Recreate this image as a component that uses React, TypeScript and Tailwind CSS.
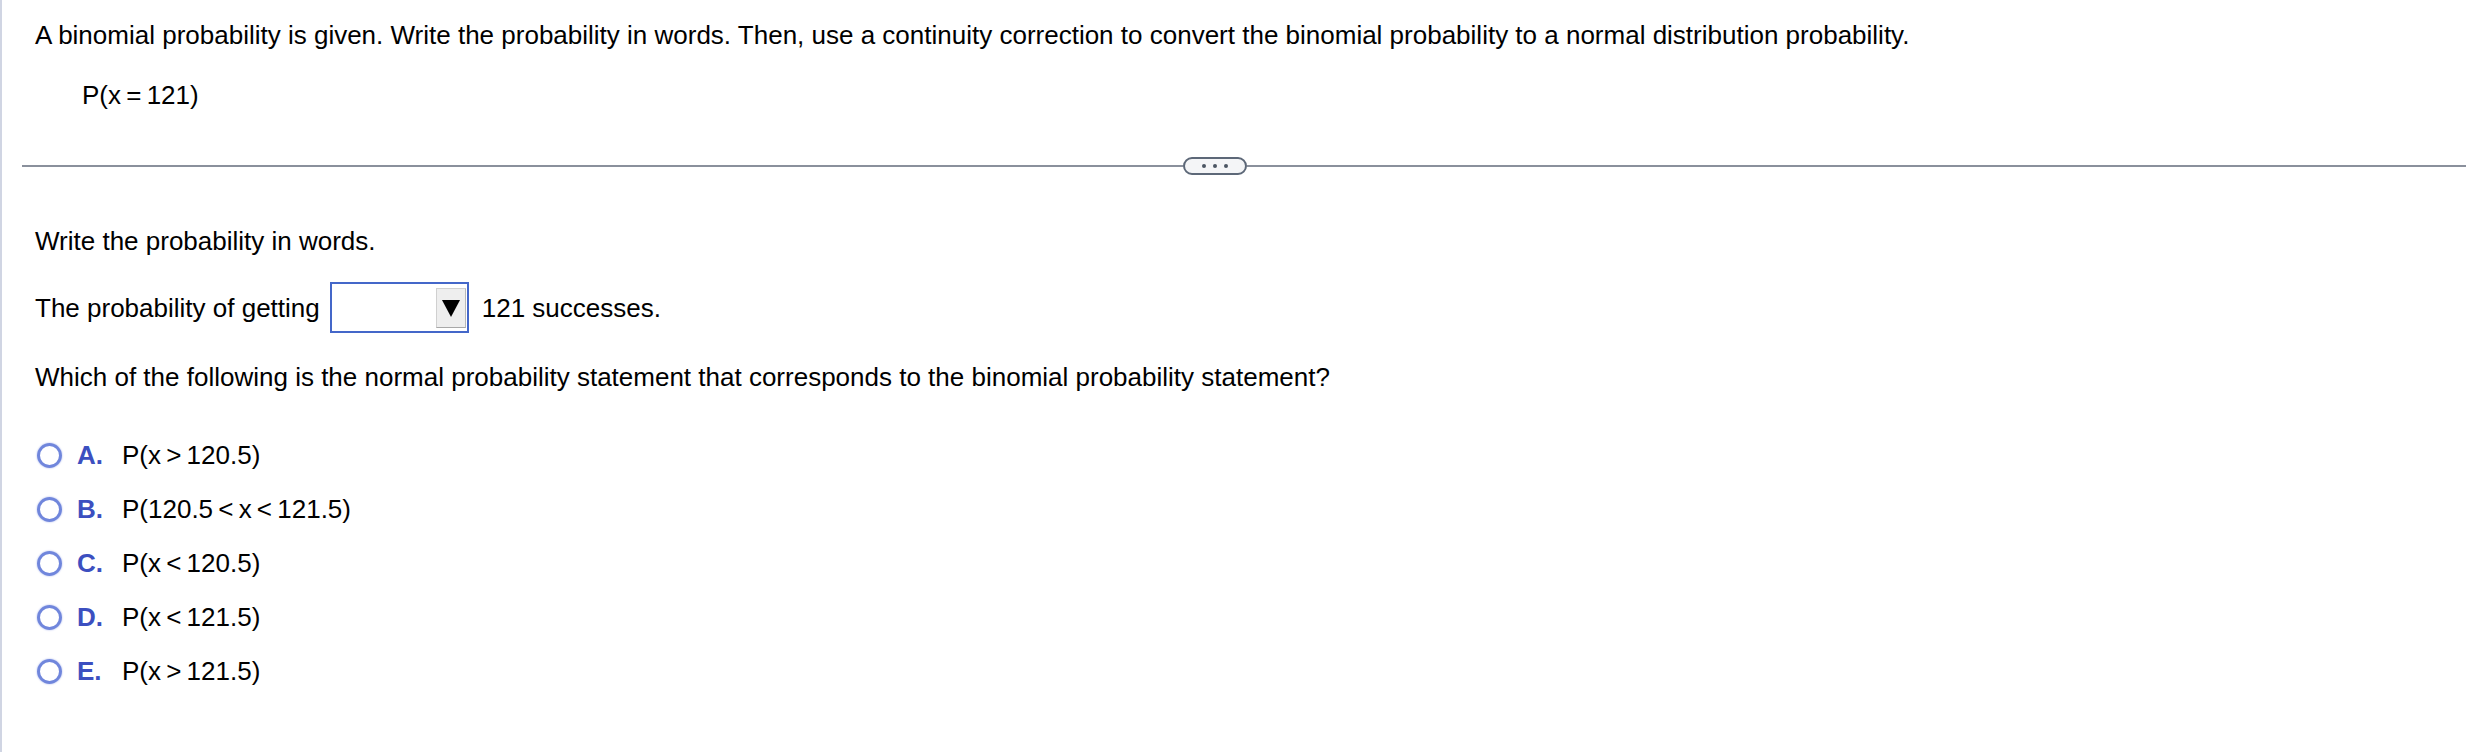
import React from 'react';

const font = { fontFamily: '"Liberation Sans", Arial, Helvetica, sans-serif' };

const options = [
  { letter: 'A.', text: 'P(x\u2009>\u2009120.5)' },
  { letter: 'B.', text: 'P(120.5\u2009<\u2009x\u2009<\u2009121.5)' },
  { letter: 'C.', text: 'P(x\u2009<\u2009120.5)' },
  { letter: 'D.', text: 'P(x\u2009<\u2009121.5)' },
  { letter: 'E.', text: 'P(x\u2009>\u2009121.5)' },
];

function Divider() {
  return (
    <div className="flex items-center ml-[20px] mr-[19px] mt-[47px] h-[18px]">
      <div className="w-[1161px] h-[2px] bg-[#8a909c]" />
      <button className="w-[64px] h-[18px] rounded-full border-2 border-[#5d6878] bg-[#f4f5f7] flex items-center justify-center gap-[7px]">
        <span className="w-[4px] h-[4px] rounded-full bg-[#4b5563]" />
        <span className="w-[4px] h-[4px] rounded-full bg-[#4b5563]" />
        <span className="w-[4px] h-[4px] rounded-full bg-[#4b5563]" />
      </button>
      <div className="flex-1 h-[2px] bg-[#8a909c]" />
    </div>
  );
}

function SelectBox() {
  return (
    <div className="w-[139px] h-[51px] border-2 border-[#4467c9] bg-white flex items-start justify-end pt-[4px] pr-[1px] mx-[10px]">
      <div className="w-[30px] h-[40px] bg-[#eeeeee] border border-[#d0d0d0] border-b-[#a8a8a8] border-r-[#b8b8b8] flex items-center justify-center">
        <svg width="18" height="18" viewBox="0 0 18 18">
          <polygon points="0,1 18,1 9,18" fill="#000" />
        </svg>
      </div>
    </div>
  );
}

export default function App() {
  return (
    <div className="w-full h-[752px] bg-white border-l-2 border-[#d0d5e3] text-black text-[26px]" style={font}>
      <div className="pt-[20px]">
        <p className="pl-[33px] leading-[30px]">
          A binomial probability is given. Write the probability in words. Then, use a continuity correction to convert the binomial probability to a normal distribution probability.
        </p>
        <p className="pl-[80px] mt-[30px] leading-[30px]">P(x{'\u2009'}={'\u2009'}121)</p>

        <Divider />

        <p className="pl-[33px] mt-[51px] leading-[30px]">Write the probability in words.</p>

        <div className="pl-[33px] mt-[26px] flex items-center">
          <span className="leading-[30px]">The probability of getting</span>
          <SelectBox />
          <span className="leading-[30px] ml-[3px]">121 successes.</span>
        </div>

        <p className="pl-[33px] mt-[29px] leading-[30px]">
          Which of the following is the normal probability statement that corresponds to the binomial probability statement?
        </p>

        <div className="pl-[35px] mt-[36px] flex flex-col">
          {options.map((o) => (
            <label key={o.letter} className="h-[54px] flex items-center cursor-pointer">
              <span className="w-[25px] h-[25px] rounded-full border-[3px] border-[#7086dc] shadow-[0_0_2px_#a3b0ea]" />
              <span className="ml-[15px] w-[45px] font-bold text-[#3c4fc0]">{o.letter}</span>
              <span>{o.text}</span>
            </label>
          ))}
        </div>
      </div>
    </div>
  );
}
